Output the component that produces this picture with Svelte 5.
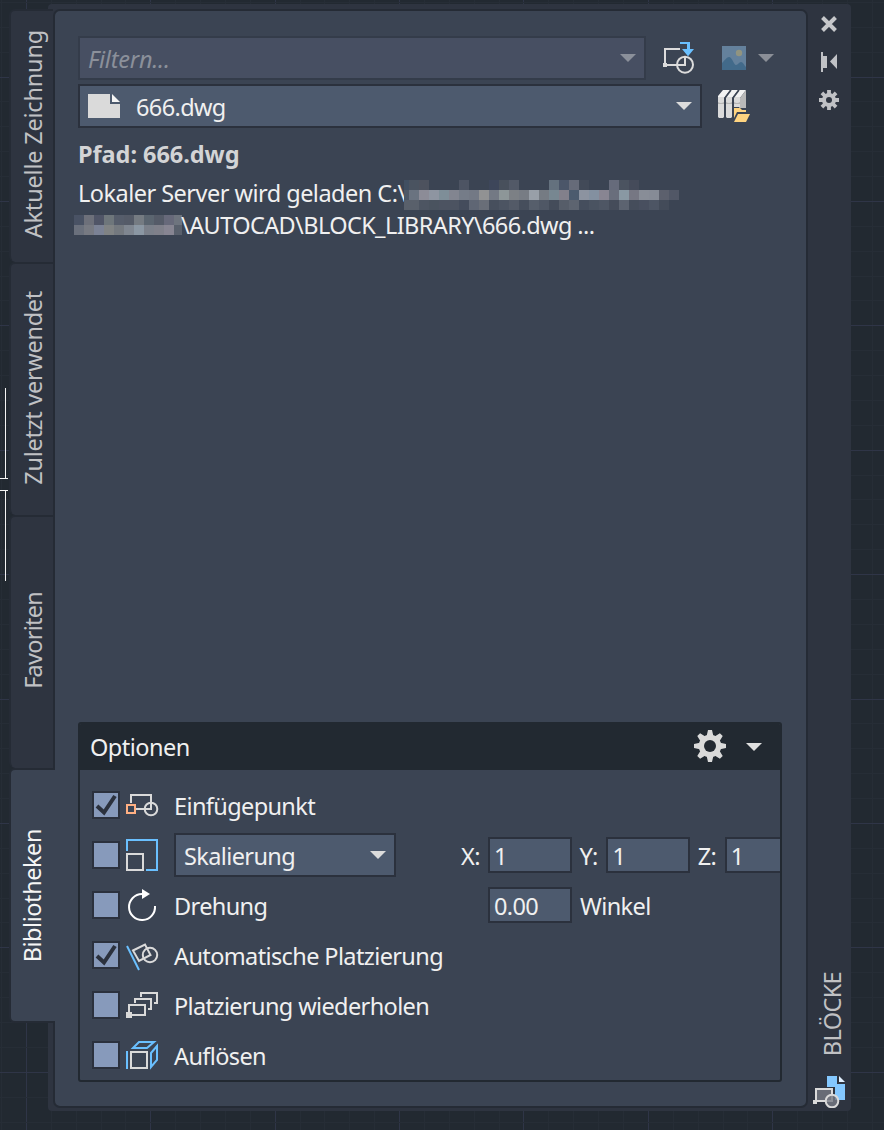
<script>

    const bg = '';      // empty mosaic cell

    let tabs = [
        { name: 'Aktuelle Zeichnung', h: 253, gap: -0.2 },
        { name: 'Zuletzt verwendet',  h: 253, gap: -0.3 },
        { name: 'Favoriten',          h: 253, gap: -0.75 },
        { name: 'Bibliotheken',       h: 255, gap: -0.45 },
    ];
    let active = 'Bibliotheken';

    let options = [
        { id: 'insert',  label: 'Einfügepunkt',             on: true  },
        { id: 'scale',   label: 'Skalierung',               on: false },
        { id: 'rotate',  label: 'Drehung',                  on: false },
        { id: 'auto',    label: 'Automatische Platzierung', on: true  },
        { id: 'repeat',  label: 'Platzierung wiederholen',  on: false },
        { id: 'explode', label: 'Auflösen',                 on: false },
    ];

    // hidden part of the path, 10px cells
    const hideA = [
        ['#414f61','#4a5360','#4d525e',bg,bg,bg,'#4d5463',bg,bg,'#3d465a','#48505c','#525967',bg,bg,bg,'#64717e','#4b5669','#666b79','#424a58',bg,bg,'#666b7b','#4b5360','#454b5a'],
        ['#4e5866','#6a7380','#8c8c97','#8e95a1','#7e8e98','#828590','#757c88','#737985','#919293','#737984','#8d9698','#7c8085','#777c84','#989fa8','#757b83','#778791','#82808b','#4c5b6e','#8c93a0','#8390a0','#888592','#696e7c','#8998a3','#767783','#888d97','#868b96','#5c606d','#515766'],
        ['#59606b','#59606b','#4d5562','#4a535f','#4c5361','#4c5361','#444c5c','#5f6674','#696e78','#474f5d','#4c5462','#535a67','#464e5c','#565e6b','#4f5765','#444c5a','#565d69','#5d6470','#454e5d','#4a5361','#4e5664','#454c5a','#5c6370','#454d5b','#484f5f','#4d5564','#434b59'],
    ];
    const hideB = [
        ['#495264','#6d707a','#505567','#6e767b','#565d6b','#555b68','#757b82','#5b6570','#555b68','#67697a','#6e747e'],
        ['#6a707c','#777a82','#7b8295','#808384','#74797f','#7f8690','#8b97a3','#7b808a','#7f808a','#878592','#59606c'],
    ];

    const lines = (n, start) => Array.from({ length: n }, (_, i) => ({ at: start + i * 24.88, i }));
    const cols = lines(36, 1.5);
    const rows = lines(46, 2.4);

    function gear(n, ro, ri, wo, wi) {     // outline of a gear round 0,0
        let p = [];
        for (let i = 0; i < n; i++) {
            const a = i * 2 * Math.PI / n;
            for (const [r, w] of [[ri, -wi], [ro, -wo], [ro, wo], [ri, wi]])
                p.push((r * Math.cos(a) - w * Math.sin(a)).toFixed(2) + ',' + (r * Math.sin(a) + w * Math.cos(a)).toFixed(2));
        }
        return p.join(' ');
    }
</script>

<div class="stage">
    <svg class="canvas" width="884" height="1130" shape-rendering="crispEdges">
        {#each cols as c}
            <rect x={Math.floor(c.at)} y="0" width="1" height="1130" fill={c.i % 5 === 1 ? '#2f3547' : '#262d36'} />
        {/each}
        {#each rows as r}
            <rect x="0" y={Math.floor(r.at)} width="884" height="1" fill={r.i % 5 === 3 ? '#2f3547' : '#262d36'} />
        {/each}
        <path d="M5 388h1v90h-1zM5 491h1v90h-1zM0 478h8v1h-8zM0 490h8v1h-8z" fill="#f4f4f4" />
    </svg>

    <nav class="tabs">
        {#each tabs as tab}
            <button class="tab" class:active={tab.name === active} style="height: {tab.h}px" on:click={() => active = tab.name}>
                <span style="letter-spacing: {tab.gap}px">{tab.name}</span>
            </button>
        {/each}
    </nav>

    <div class="frame">
        <main class="panel">
            <div class="row filter-row">
                <div class="field filter"><em>Filtern...</em>
                    <svg width="16" height="8"><path d="M0 0h16l-8 8z" fill="#8b909a" /></svg>
                </div>
                <svg class="ic-insert" width="34" height="34" fill="none">
                    <path d="M18 7H3v16h20V14" stroke="#dcdcdc" stroke-width="2" />
                    <path d="M1 21h4v4h-4z" fill="#dcdcdc" />
                    <circle cx="23" cy="22.7" r="8" stroke="#dcdcdc" stroke-width="2" />
                    <path d="M18 0h10v7h4l-6 7.3l-6-7.3h5V2h-7z" fill="#6ac0ff" />
                </svg>
                <svg class="ic-image" width="24" height="24">
                    <rect width="24" height="24" fill="#64819c" />
                    <circle cx="17" cy="7" r="3.2" fill="#919480" />
                    <path d="M0 17C3 14 5 11 7 11C10 11 12 19 14 19C16 19 17 16 19 16C21 16 22 19 24 21V24H0z" fill="#426a8a" />
                </svg>
                <svg class="ic-down" width="16" height="8"><path d="M0 0h16l-8 8z" fill="#8b8f97" /></svg>
            </div>

            <div class="row file-row">
                <div class="field file">
                    <svg width="32" height="24">
                        <path d="M0 0h22v10h10v14H0z" fill="#dadada" /><path d="M24 0l8 8h-8z" fill="#f5f5f5" />
                    </svg>
                    <span>666.dwg</span>
                    <svg width="16" height="8"><path d="M0 0h16l-8 8z" fill="#dcdcdc" /></svg>
                </div>
                <svg class="ic-books" width="32" height="32">
                    {#each [0, 8, 16] as x}
                        <path d="M{x} 6l5-6h7l-6 8v3h-6z" fill="#f2f2f2" />
                        <path d="M{x} 7h6v20l-1 1h-4l-1-1z" fill="#dadada" />
                        <path d="M{x} 12q3 2 6 0v2h-6z" fill="#b5b5b5" />
                    {/each}
                    <path d="M7 28V8l6-8M15 28V8l6-8" stroke="#3b4453" stroke-width="1.6" fill="none" />
                    <path d="M22 8l6-8v18h-6z" fill="#b9b9b9" />
                    <path d="M15 17h6l2 3h6v3h3v9H15z" fill="#3b4453" />
                    <path d="M16 18h6l2 2h4v2h-9l-3 6z" fill="#ffd480" />
                    <path d="M20 24h12l-4 8H16z" fill="#ffd480" />
                </svg>
            </div>

            <h2>Pfad: 666.dwg</h2>
            <p class="first"><span>Lokaler Server wird geladen C:\</span>
                <svg width="275" height="30" shape-rendering="crispEdges">
                    {#each hideA as line, y}{#each line as c, x}
                        {#if c}<rect x={x ? x * 10 - 5 : 0} y={y * 10} width={x ? 10 : 5} height="10" fill={c} />{/if}
                    {/each}{/each}
                </svg>
            </p>
            <p class="second">
                <svg width="108" height="20" shape-rendering="crispEdges">
                    {#each hideB as line, y}{#each line as c, x}
                        <rect x={x * 10} y={y * 10} width="10" height="10" fill={c} />
                    {/each}{/each}
                </svg>
                <span>\AUTOCAD\BLOCK_LIBRARY\666.dwg ...</span>
            </p>

            <section class="options">
                <header><span>Optionen</span>
                    <svg class="wheel" width="32" height="32" viewBox="-16 -16 32 32">
                        <polygon points={gear(8, 16, 9, 2, 3.6)} fill="#dadada" />
                        <circle r="11.3" fill="#dadada" /><circle r="6" fill="#222931" />
                    </svg>
                    <svg class="arrow" width="16" height="8"><path d="M0 0h16l-8 8z" fill="#e0e0e0" /></svg>
                </header>

                {#each options as o}
                    <div class="option">
                        <button class="check" aria-label={o.label} on:click={() => o.on = !o.on}>
                            {#if o.on}<svg width="24" height="24"><path d="M3 13L10 19.500L21 3" fill="none" stroke="#2b313d" stroke-width="4" /></svg>{/if}
                        </button>
                        <svg class="glyph" width="34" height="34" fill="none" stroke="#dadada" stroke-width="2">
                            {#if o.id === 'insert'}
                                <path d="M5 14V6H25V20H10" /><circle cx="25" cy="20" r="6.300" />
                                <rect x="1" y="16" width="8" height="8" stroke="#ffb083" />
                            {:else if o.id === 'scale'}
                                <rect x="1" y="15" width="16" height="16" /><path d="M1 12V1H31V31H20" stroke="#6ac0ff" />
                            {:else if o.id === 'rotate'}
                                <path d="M16 5A13 13 0 1 0 29 17" stroke="#fff" /><path d="M16 0l8 5l-8 5z" fill="#fff" stroke="none" />
                            {:else if o.id === 'auto'}
                                <path d="M1 7L13 31" stroke="#6ac0ff" /><path d="M7 11.500L19 5.500L24.500 16L13 22z" />
                                <circle cx="24" cy="16" r="7.200" />
                            {:else if o.id === 'repeat'}
                                <path d="M3 24V16H19V26H5M9 14V10H25V20H22M15 8V4H31V14H28" /><path d="M0 23h6v6h-6z" fill="#dadada" stroke="none" />
                            {:else}
                                <rect x="5" y="13" width="16" height="16" />
                                <path d="M1 12V30M7 9L13 3H28L21 9zM25 14L31 7V21L25 28z" stroke="#6ac0ff" />
                            {/if}
                        </svg>
                        {#if o.id === 'scale'}
                            <div class="field select"><span>{o.label}</span>
                                <svg width="16" height="8"><path d="M0 0h16l-8 8z" fill="#dcdcdc" /></svg>
                            </div>
                            <div class="axes">
                                {#each ['X:', 'Y:', 'Z:'] as axis}
                                    <span class="axis">{axis}</span><div class="field num"><span>1</span></div>
                                {/each}
                            </div>
                        {:else}
                            <span class="label {o.id}">{o.label}</span>
                            {#if o.id === 'rotate'}
                                <div class="field num"><span>0.00</span></div><span class="unit">Winkel</span>
                            {/if}
                        {/if}
                    </div>
                {/each}
            </section>
        </main>

        <aside>
            <svg width="16" height="16"><path d="M1.500 1.500L14.500 14.500M14.500 1.500L1.500 14.500" stroke="#c6c7ca" stroke-width="4" /></svg>
            <svg class="pin" width="16" height="20"><path d="M0 0h2v4h4v12h-4v4h-2zM16 2v15l-7-7.500z" fill="#c0c1c5" /></svg>
            <svg class="cog" width="20" height="20" viewBox="-10 -10 20 20">
                <polygon points={gear(8, 10, 6, 1.9, 1.9)} fill="#c0c1c5" /><circle r="5" fill="none" stroke="#c0c1c5" stroke-width="4" />
                <circle r="3" fill="#2e3440" />
            </svg>
            <span class="title">BLÖCKE</span>
            <svg width="32" height="32">
                <path d="M14 0h10v8h8v16H14z" fill="#84c8ff" /><path d="M26 0l6 6h-6z" fill="#e4f1ff" />
                <path d="M0 11h22v16H0z" fill="#2e3440" />
                <path d="M3 13H19V25H3z" fill="#686c76" stroke="#dadada" stroke-width="2" /><path d="M0 24h4v4h-4z" fill="#dadada" />
                <circle cx="19" cy="25" r="6.300" fill="#777b84" fill-opacity=".8" stroke="#dadada" stroke-width="2" />
            </svg>
        </aside>
    </div>
</div>


<style>

    :global(body) { margin: 0; background: #222931; }

    .stage    {
                position: relative;     display     : flex;
                width   : 884px;        height      : 1130px;
                overflow: hidden;       box-sizing  : border-box;
                padding : 4px 0 0 9px;  color       : #f0f0f0;
                font    : 23.500px/32px "Noto Sans", "Open Sans", sans-serif;
                letter-spacing: -.62px;  white-space : nowrap;
    }
    svg       { display: block; flex: none; }
    button    { font: inherit; color: inherit; padding: 0; margin: 0; border: 0; }
    .canvas   { position: absolute; left: 0; top: 0; }

    .tabs     { position: relative; z-index: 2; width: 45px; margin-right: -6px; padding-top: 5px; }
    .tab      {
                display    : flex;          width       : 44px;
                align-items: center;        justify-content: center;
                box-sizing : border-box;    background  : #2e3440;
                border     : 2px solid #252b35;
                border-right: 0;            border-bottom-width: 0;
                border-radius: 6px 0 0 6px; color       : #c0c1c4;
                padding-bottom: 4px;
    }
    .tab span { writing-mode: vertical-rl; transform: rotate(180deg); margin-left: 1px; }
    .tab.active { width: 46px; background: #3b4453; color: #f5f5f5; border-bottom-width: 2px; padding-bottom: 0; }
    .tab.active span { margin-left: 0; margin-right: 2px; }

    .frame    {
                position: relative;         display : flex;
                width   : 803px;            height  : 1107px;
                box-sizing: border-box;     padding : 5px 0 3px 5px;
                background: #2e3440;        border-radius: 4px;
    }
    .panel    {
                width  : 755px;             box-sizing: border-box;
                padding: 26px 23px 24px;    background: #3b4453;
                border : 2px solid #252b35; border-radius: 7px;
                display: flex;              flex-direction: column;
    }
    .row      { display: flex; align-items: center; }
    .field    {
                display    : flex;          align-items: center;
                box-sizing : border-box;    background : #4d5a6e;
                border     : 2px solid #2b313d;
    }
    .filter-row { height: 44px; margin-top: -1px; }
    .filter   { width: 568px; height: 44px; justify-content: space-between; padding: 0 8px 0 8px; background: #474f62; border-color: #343c4a; color: #8b909a; }
    .filter em{ padding-top: 2px; letter-spacing: -.22px; }
    .ic-insert{ margin: 2px 0 0 16px; }
    .ic-image { margin-left: 26px; }
    .ic-down  { margin-left: 12px; }
    .file-row { margin-top: 4px; height: 44px; }
    .file     { width: 624px; height: 44px; padding: 0 8px; }
    .file span{ flex: 1; margin-left: 16px; padding-top: 2px; }
    .ic-books { margin-left: 16px; }

    h2        { margin: 10px 0 0; font-size: 23.500px; line-height: 32px; font-weight: 700; color: #d3d4d6; letter-spacing: -.05px; }
    p         { display: flex; align-items: center; margin: 0; height: 32px; }
    .first    { margin-top: 7px; letter-spacing: -.52px; }
    .first span { width: 326px; }
    .first svg{ margin-top: 3px; }
    .second   { margin-left: -4px; letter-spacing: -.6px; }
    .second span { margin-left: -1px; }

    .options  {
                margin-top : auto;          width     : 704px;
                height     : 360px;         box-sizing: border-box;
                border     : 2px solid #222931;
                border-radius: 3px;         overflow  : hidden;
    }
    header    { display: flex; align-items: center; height: 46px; margin-bottom: 10px; padding: 0 18px 0 10px; background: #222931; }
    header span { flex: 1; letter-spacing: -.5px; }
    header .wheel { margin-bottom: 2px; }
    header .arrow { margin-left: 20px; }

    .option   { display: flex; align-items: center; height: 50px; padding-left: 12px; }
    .check    { width: 28px; height: 28px; box-sizing: border-box; flex: none; background: #879abb; border: 2px solid #2b313d; }
    .glyph    { margin: 2px 14px 0 6px; }
    .label    { padding-top: 2px; }
    .label.rotate { width: 314px; }
    .select   { width: 222px; height: 44px; flex: none; justify-content: space-between; padding: 0 8px 0 8px; }
    .select span, .num span { padding-top: 2px; }
    .axes     { display: flex; align-items: center; margin-left: 65px; }
    .axis     { width: 27px; padding-top: 2px; }
    .axes .num  { margin-right: 7.400px; }
    .num      { width: 84px; height: 36px; flex: none; padding-left: 4px; }
    .unit     { margin-left: 8px; padding-top: 2px; }

    aside     { display: flex; flex-direction: column; align-items: center; width: 42px; padding-top: 7px; }
    aside .pin{ margin-top: 20px; }
    aside .cog{ margin-top: 18px; }
    .title    { writing-mode: vertical-rl; transform: rotate(180deg); margin: auto 0 20px 5px; color: #c0c1c4; }

</style>
